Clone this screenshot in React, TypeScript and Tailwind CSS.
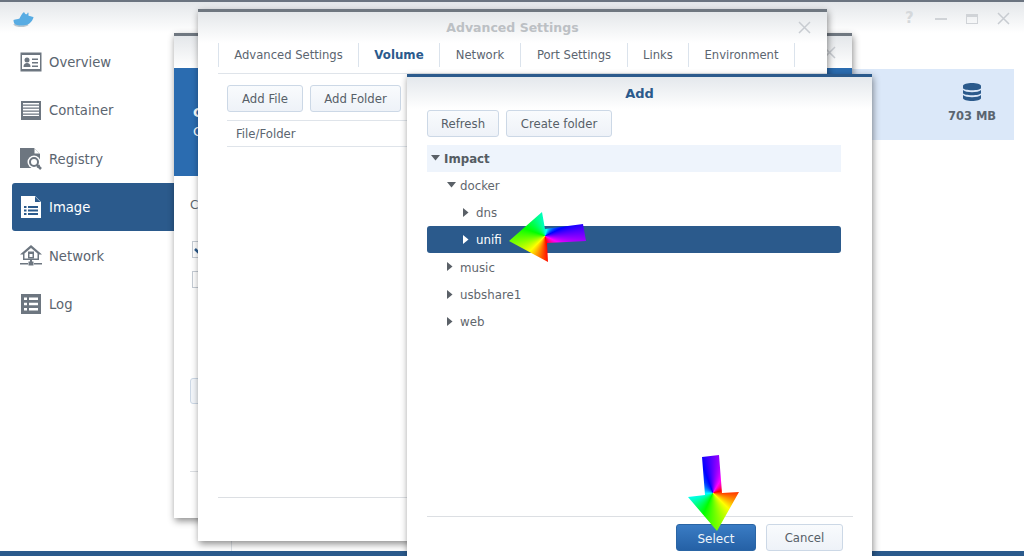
const font = "font-['DejaVu_Sans',sans-serif]";

function OverviewIcon() {
  return (
    <svg width="22" height="20" viewBox="0 0 22 20">
      <rect x="0.5" y="0.5" width="21" height="19" fill="#6d7680" />
      <rect x="2" y="3" width="18" height="14" fill="#fff" />
      <circle cx="7" cy="8" r="2.5" fill="#6d7680" />
      <path d="M3.5 15c0-3 1.5-4 3.500-4s3.500 1 3.500 4z" fill="#6d7680" />
      <path d="M12 6.500h6v1.500h-6zM12 10h6v1.500h-6zM12 13.500h6v1.500h-6z" fill="#6d7680" />
    </svg>
  );
}

function ContainerIcon() {
  return (
    <svg width="20" height="19" viewBox="0 0 20 19">
      <rect x="0" y="0" width="20" height="19" fill="#6d7680" />
      <rect x="2" y="2" width="16" height="13" fill="#fff" />
      <path d="M2 3.500h16v1.200H2zM2 6.500h16v1.200H2zM2 9.500h16v1.200H2zM2 12.500h16v1.200H2z" fill="#6d7680" />
    </svg>
  );
}

function RegistryIcon() {
  return (
    <svg width="23" height="22" viewBox="0 0 23 22">
      <path d="M0 0h14l6 6v14H0z" fill="#6d7680" />
      <path d="M14.500 0.500l5 5h-5z" fill="#fff" />
      <circle cx="14" cy="14" r="6.500" fill="#fff" />
      <circle cx="14" cy="14" r="4" fill="#fff" stroke="#6d7680" strokeWidth="2" />
      <path d="M17 17l4 4" stroke="#6d7680" strokeWidth="2.500" />
    </svg>
  );
}

function ImageIcon() {
  return (
    <svg width="20" height="22" viewBox="0 0 20 22">
      <path d="M0 0h14l6 6v16H0z" fill="#fff" />
      <path d="M14 0.500l5.500 5.500H14z" fill="#2b5a8c" />
      <path d="M3 10h2.500v2H3zM7 10h10v2H7zM3 13.500h2.500v2H3zM7 13.500h10v2H7zM3 17h2.500v2H3zM7 17h10v2H7z" fill="#2b5a8c" />
    </svg>
  );
}

function NetworkIcon() {
  return (
    <svg width="22" height="21" viewBox="0 0 22 21">
      <path d="M11 0l11 9.500h-3V15H3V9.500H0z" fill="#6d7680" />
      <path d="M11 3l6.500 5.500V13.500h-13V8.500z" fill="#fff" />
      <path d="M8 6.500h6V13.500H8z" fill="#6d7680" />
      <rect x="9.500" y="9" width="3" height="3" fill="#fff" />
      <path d="M10 14h2v3h-2zM0 18h8v1.500H0zM14 18h8v1.500h-8z" fill="#6d7680" />
      <rect x="8.500" y="16.500" width="5" height="4" fill="#6d7680" />
    </svg>
  );
}

function LogIcon() {
  return (
    <svg width="20" height="20" viewBox="0 0 20 20">
      <rect width="20" height="20" fill="#6d7680" />
      <path d="M3 3.500h3v2.500H3zM8 3.500h9v2.500H8zM3 8.700h3v2.500H3zM8 8.700h9v2.500H8zM3 14h3v2.500H3zM8 14h9v2.500H8z" fill="#fff" />
    </svg>
  );
}

function Whale() {
  return (
    <svg width="21" height="16" viewBox="0 0 21 16">
      <path d="M1 13c2.500 2.500 10 3 14 .5" stroke="#b9c6cf" strokeWidth="2" fill="none" />
      <path d="M0.500 9c2.500-1 4-.5 6-1.500C7.500 5 9 2.500 11 1c.7 1.200 1.200 2 2 2.200.8.200 1.500-.7 2-2 .8 1 .8 2 .2 3 1.500 1 3.500 1.300 5.300 1.800-.5 3-3 6.500-6.500 7.800-3.500 1-8.500 1-11.500-.3C1.200 12.500.5 11 .5 9z" fill="#58ace3" />
    </svg>
  );
}

function CloseX({ color = "#c8ccd1" }: { color?: string }) {
  return (
    <svg width="13" height="13" viewBox="0 0 13 13">
      <path d="M1 1l11 11M12 1L1 12" stroke={color} strokeWidth="1.500" fill="none" />
    </svg>
  );
}

function Btn({ label, w }: { label: string; w: string }) {
  return (
    <button className={`${w} h-[27px] rounded-[3px] border border-[#ccd8e6] bg-gradient-to-b from-[#f9fbfd] to-[#eef2f8] pt-[3px] text-[11.700px] text-[#575f68]`}>
      {label}
    </button>
  );
}

const navItems = [
  { label: "Overview", icon: <OverviewIcon /> },
  { label: "Container", icon: <ContainerIcon /> },
  { label: "Registry", icon: <RegistryIcon /> },
  { label: "Image", icon: <ImageIcon />, active: true },
  { label: "Network", icon: <NetworkIcon /> },
  { label: "Log", icon: <LogIcon /> },
];

const tabs = [
  { label: "Advanced Settings", w: "w-[140px]" },
  { label: "Volume", w: "w-[81px]", active: true },
  { label: "Network", w: "w-[81px]" },
  { label: "Port Settings", w: "w-[107px]" },
  { label: "Links", w: "w-[61px]" },
  { label: "Environment", w: "w-[107px]" },
];

function Caret({ open, color = "#5a6067" }: { open?: boolean; color?: string }) {
  return open ? (
    <svg width="9" height="6" viewBox="0 0 9 6"><path d="M0 0h9L4.500 5.500z" fill={color} /></svg>
  ) : (
    <svg width="6" height="9" viewBox="0 0 6 9"><path d="M0 0l5.500 4.500L0 9z" fill={color} /></svg>
  );
}

const treeRows = [
  { label: "Impact", pad: "pl-[4px]", open: true, bold: true, style: "bg-[#eef4fc] text-[#555c63]" },
  { label: "docker", pad: "pl-[20px]", open: true, style: "text-[#5f666d]" },
  { label: "dns", pad: "pl-[36px]", style: "text-[#5f666d]" },
  { label: "unifi", pad: "pl-[36px]", style: "bg-[#2b5a8c] text-white rounded-[3px]", selected: true },
  { label: "music", pad: "pl-[20px]", style: "text-[#5f666d]" },
  { label: "usbshare1", pad: "pl-[20px]", style: "text-[#5f666d]" },
  { label: "web", pad: "pl-[20px]", style: "text-[#5f666d]" },
];

export default function App() {
  return (
    <div className={`relative flex h-[556px] w-[1024px] flex-col overflow-hidden bg-white ${font}`}>
      {/* main window */}
      <div className="h-[33px] shrink-0 border-t-2 border-[#6b7480] bg-gradient-to-b from-[#e4e7ea] to-white pl-[13px] pt-[9px]">
        <Whale />
      </div>
      <div className="absolute right-[14px] top-[11px] flex items-center gap-[19px]">
        <span className="w-[11px] text-[15px] leading-[15px] font-bold text-[#d5d8db]">?</span>
        <span className="h-[2px] w-[12px] bg-[#d0d3d7]" />
        <span className="h-[10px] w-[12px] border border-t-[3px] border-[#d0d3d7]" />
        <CloseX />
      </div>
      <div className="flex flex-1">
        <div className="w-[232px] border-r border-[#dfe3e8] pl-[12px] pt-[4px]">
          {navItems.map((item) => (
            <div
              key={item.label}
              className={`flex h-[48.500px] items-center rounded-[3px] ${item.active ? "bg-[#2b5a8c] text-white" : "text-[#5b6570]"}`}
            >
              <span className="flex w-[37px] justify-center pl-px pt-px">{item.icon}</span>
              <span className="pt-[3px] text-[13.200px]">{item.label}</span>
            </div>
          ))}
        </div>
        <div className="flex flex-1 justify-end pt-[36px] pr-[10px]">
          <div className="flex h-[71px] w-full justify-end bg-[#dbe8f9] pr-[12px] pt-[14px]">
            <div className="flex w-[60px] flex-col items-center">
              <svg width="18" height="18" viewBox="0 0 18 18">
                <path d="M0 3c0-4 18-4 18 0v2c0 3-18 3-18 0zM0 7c3 3 15 3 18 0v3c0 3-18 3-18 0zM0 12c3 3 15 3 18 0v3c0 4-18 4-18 0z" fill="#2b5a8c" />
              </svg>
              <span className="mt-[7px] text-[11.500px] font-bold text-[#5a6570]">703 MB</span>
            </div>
          </div>
        </div>
      </div>
      <div className="h-[5px] shrink-0 bg-[#2b5a8c]" />

      {/* wizard window */}
      <div className="absolute left-[174px] top-[33px] flex h-[485px] w-[678px] flex-col border-t-[3px] border-[#6f7780] bg-white shadow-[1px_3px_7px_rgba(0,0,0,0.45)]">
        <div className="flex h-[32px] shrink-0 items-center justify-end bg-gradient-to-b from-[#e4e7ea] to-white pr-[16px]">
          <CloseX />
        </div>
        <div className="flex h-[108px] shrink-0 flex-col justify-center gap-[3px] bg-[#2b6cb0] pl-[19px] text-[13px] leading-[16px] text-white">
          <span className="font-bold">C</span>
          <span>C</span>
        </div>
        <div className="pl-[16px] pt-[20px] text-[12px] text-[#5f666d]">C</div>
        <div className="ml-[18px] mt-[27px] flex h-[17px] w-[17px] items-center border border-[#c5ccd4]">
          <svg width="15" height="15" viewBox="0 0 15 15">
            <path d="M2 7l3 3 7-7" stroke="#2b5a8c" strokeWidth="2.500" fill="none" />
          </svg>
        </div>
        <div className="ml-[18px] mt-[13px] h-[17px] w-[17px] border border-[#c5ccd4]" />
        <div className="ml-[16px] mt-[90px] h-[26px] w-[60px] rounded-[3px] border border-[#ccd8e6] bg-[#f3f6fa]" />
        <div className="ml-[16px] mt-[67px] h-px bg-[#dcdfe3]" />
      </div>

      {/* advanced settings window */}
      <div className="absolute left-[198px] top-[9px] flex h-[532px] w-[629px] flex-col border-t-[3px] border-[#6f7780] bg-white shadow-[1px_3px_7px_rgba(0,0,0,0.45)]">
        <div className="relative flex h-[31px] shrink-0 items-center justify-center bg-gradient-to-b from-[#e4e7ea] to-white pt-px text-[12.500px] font-bold text-[#bcc0c4]">
          Advanced Settings
          <span className="absolute right-[16px] top-[9px]"><CloseX /></span>
        </div>
        <div className="ml-[20px] flex h-[31px] shrink-0 items-start border-b border-[#dfe4ea]">
          {tabs.map((t) => (
            <div
              key={t.label}
              className={`flex h-[24px] ${t.w} items-center justify-center border-l border-[#dbe3ec] pt-[2px] last:border-r ${t.active ? "text-[11.800px] font-bold text-[#2b5a8c]" : "text-[11.600px] text-[#5b6570]"}`}
            >
              {t.label}
            </div>
          ))}
        </div>
        <div className="ml-[29px] mt-[11px] flex gap-[7px]">
          <Btn label="Add File" w="w-[76px]" />
          <Btn label="Add Folder" w="w-[91px]" />
        </div>
        <div className="ml-[29px] mt-[8px] flex h-[27px] items-center border-y border-[#dfe4ea] pl-[9px] pt-[2px] text-[11.700px] text-[#5b6570]">
          File/Folder
        </div>
        <div className="flex-1" />
        <div className="ml-[20px] mb-[43px] h-px bg-[#dcdfe3]" />
      </div>

      {/* add folder dialog */}
      <div className="absolute left-[407px] top-[74px] flex h-[482px] w-[465px] flex-col border-t-[3px] border-[#2b5a8c] bg-white shadow-[1px_3px_7px_rgba(0,0,0,0.45)]">
        <div className="flex h-[32px] shrink-0 items-center justify-center bg-gradient-to-b from-[#e4e8ec] to-white pt-[2px] text-[13px] font-bold text-[#2b5a8c]">
          Add
        </div>
        <div className="ml-[20px] mt-px flex gap-[7px]">
          <Btn label="Refresh" w="w-[72px]" />
          <Btn label="Create folder" w="w-[106px]" />
        </div>
        <div className="ml-[20px] mt-[7.500px] w-[414px]">
          {treeRows.map((r) => (
            <div key={r.label} className={`flex h-[27.200px] items-center ${r.pad} ${r.style}`}>
              <span className="flex w-[13px] items-center">
                <Caret open={r.open} color={r.selected ? "#fff" : "#5a6067"} />
              </span>
              <span className={`pt-[3px] text-[11.800px] ${r.bold ? "font-bold" : ""}`}>{r.label}</span>
            </div>
          ))}
        </div>
        <div className="flex-1" />
        <div className="ml-[20px] mr-[19px] h-px bg-[#dcdfe3]" />
        <div className="mb-[5px] mt-[7px] flex h-[27px] justify-end gap-[10px] pr-[29px]">
          <button className="h-[27px] w-[80px] rounded-[3px] border border-[#2a65a5] bg-gradient-to-b from-[#3a7cc4] to-[#2561a6] pt-[2px] text-[12px] text-[#eef4fa]">Select</button>
          <button className="h-[27px] w-[77px] rounded-[3px] border border-[#ccd8e6] bg-gradient-to-b from-[#f9fbfd] to-[#eef2f8] pt-[2px] text-[11.700px] text-[#575f68]">Cancel</button>
        </div>
      </div>

      {/* annotation arrows */}
      <div className="absolute left-[509px] top-[212px] h-[51px] w-[78px] bg-[conic-gradient(from_15deg_at_36px_24px,#00ffff,#0000ff_50deg,#ff00ff_100deg,#ff0000_155deg,#ffff00_210deg,#00ff00_275deg,#00ffff_360deg)] [clip-path:polygon(0px_29px,33px_0px,36px_17px,74px_12px,77px_29px,38px_31px,39px_50px)]" />
      <div className="absolute left-[688px] top-[455px] h-[77px] w-[52px] bg-[conic-gradient(from_-20deg_at_25px_38px,#0000ff,#ff00ff_50deg,#ff0000_95deg,#ffff00_155deg,#00ff00_225deg,#00ffff_285deg,#0000ff_360deg)] [clip-path:polygon(14px_2px,31px_0px,34px_38px,51px_37px,29px_76px,0px_42px,17px_40px)]" />
    </div>
  );
}
